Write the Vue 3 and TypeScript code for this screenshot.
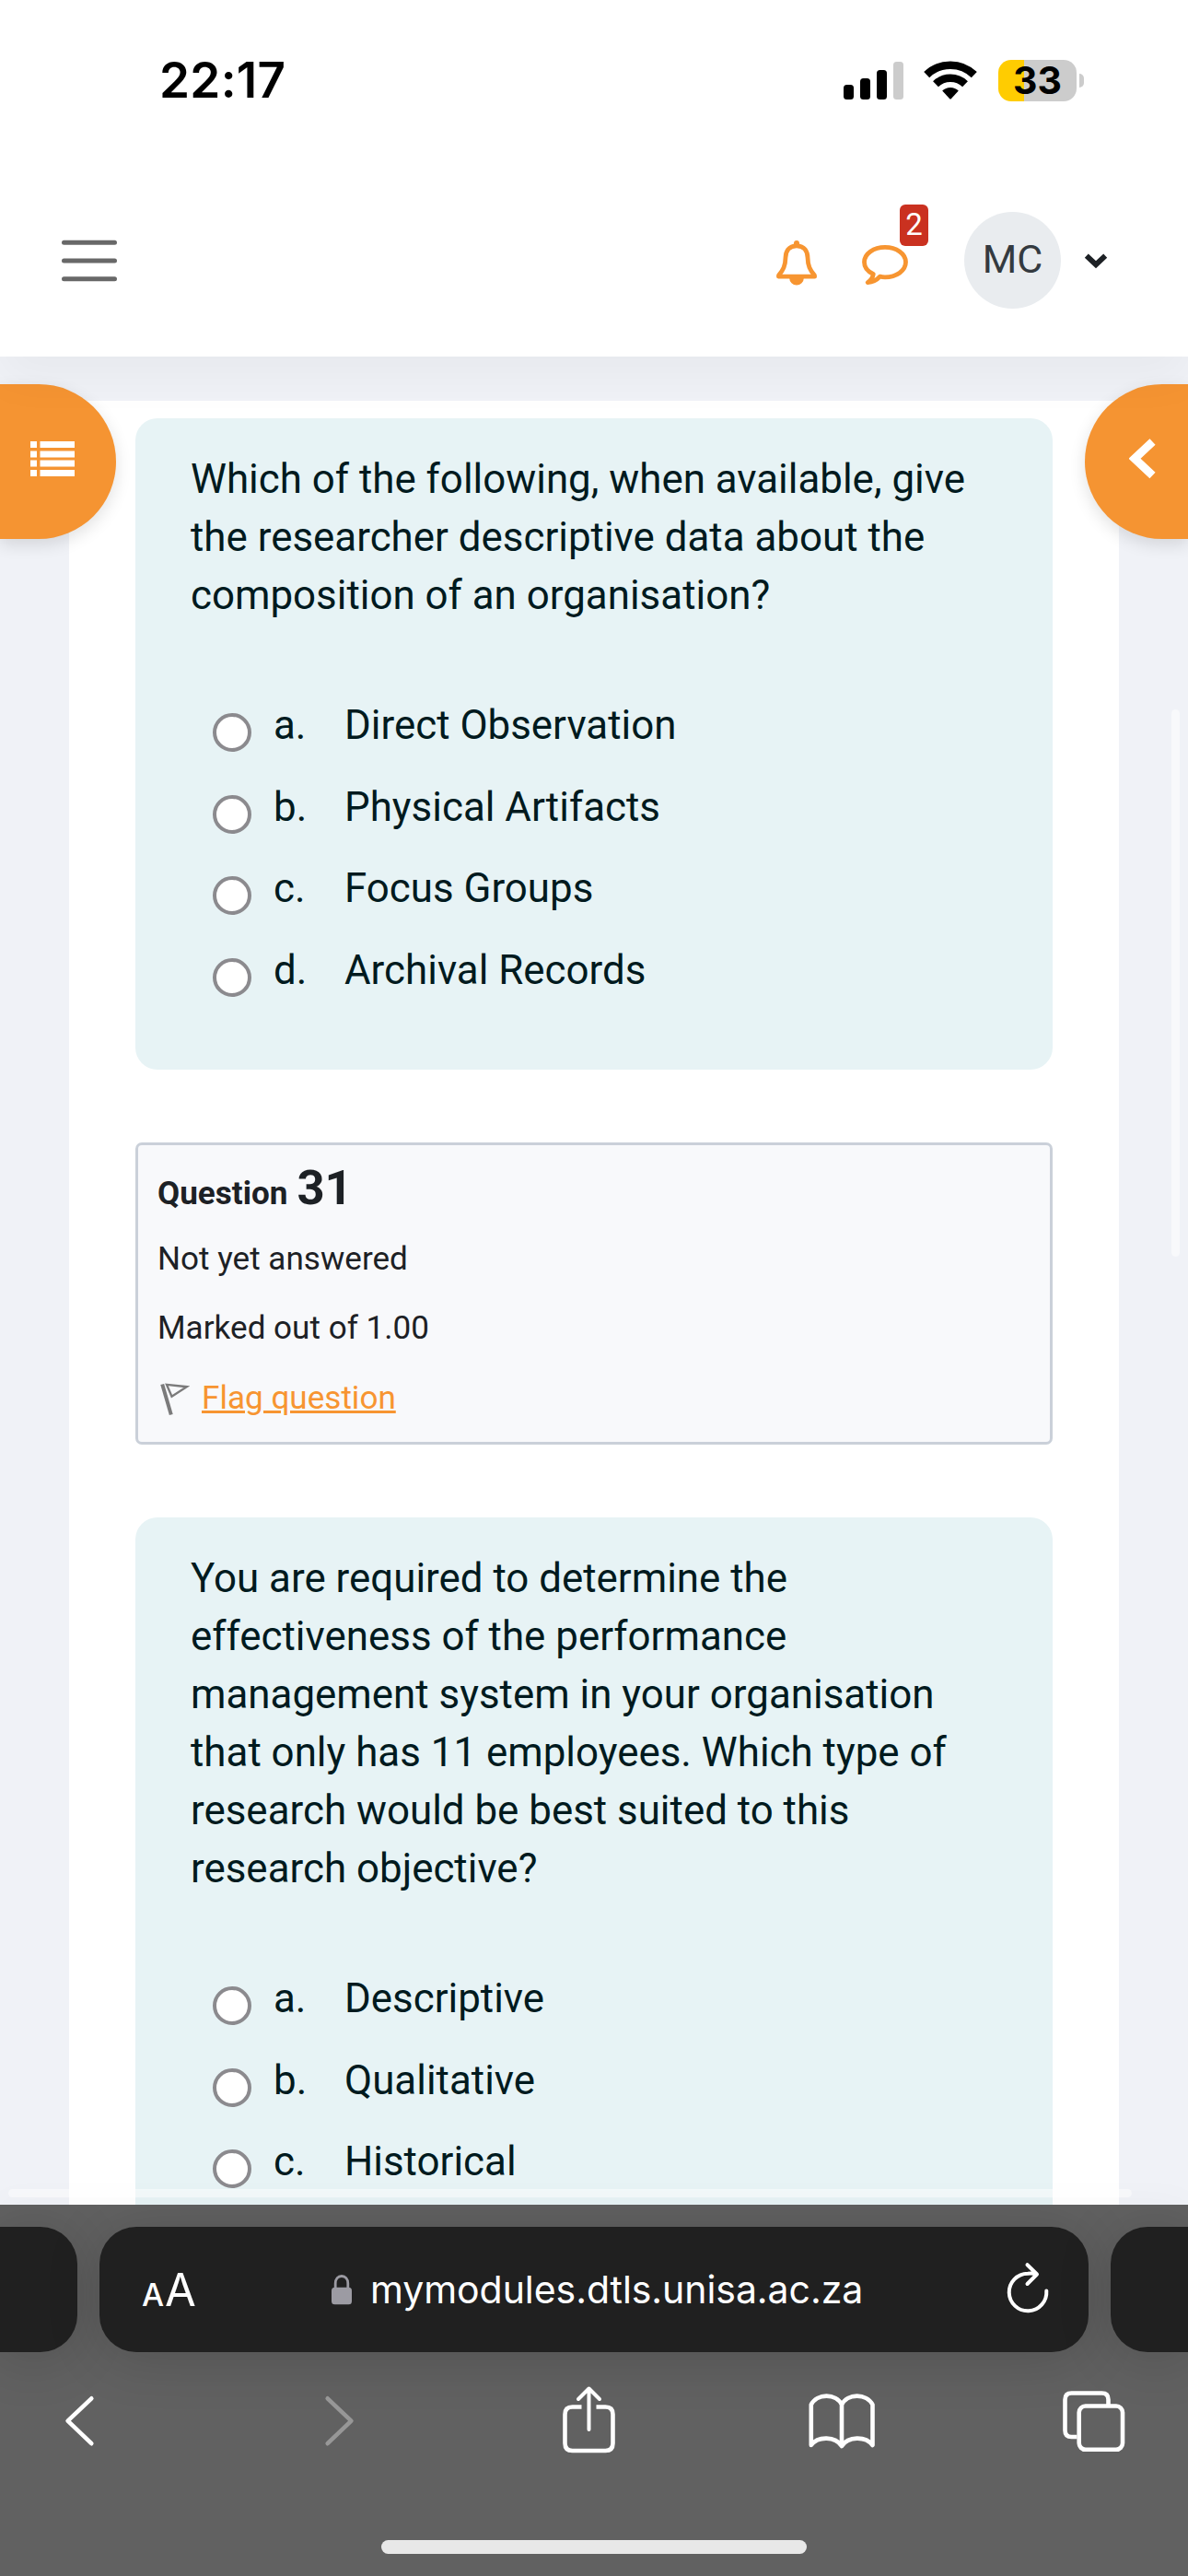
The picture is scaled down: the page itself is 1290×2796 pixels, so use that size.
<script setup lang="ts">
interface Option {
  letter: string
  text: string
}

interface Question {
  lines: string[]
  options: Option[]
}

const current: Question = {
  lines: [
    'Which of the following, when available, give',
    'the researcher descriptive data about the',
    'composition of an organisation?',
  ],
  options: [
    { letter: 'a.', text: 'Direct Observation' },
    { letter: 'b.', text: 'Physical Artifacts' },
    { letter: 'c.', text: 'Focus Groups' },
    { letter: 'd.', text: 'Archival Records' },
  ],
}

const next: Question = {
  lines: [
    'You are required to determine the',
    'effectiveness of the performance',
    'management system in your organisation',
    'that only has 11 employees. Which type of',
    'research would be best suited to this',
    'research objective?',
  ],
  options: [
    { letter: 'a.', text: 'Descriptive' },
    { letter: 'b.', text: 'Qualitative' },
    { letter: 'c.', text: 'Historical' },
  ],
}
</script>

<template>
  <div class="screen">
    <header class="top">
      <div class="status">
        <span class="time">22:17</span>
        <div class="indicators">
          <svg class="signal" width="65" height="41" viewBox="0 0 65 41">
            <rect x="0" y="25" width="11" height="16" rx="3.5" />
            <rect x="18" y="18" width="11" height="23" rx="3.5" />
            <rect x="36" y="9" width="11" height="32" rx="3.5" />
            <rect x="54" y="0" width="11" height="41" rx="3.5" fill="#ccc" />
          </svg>
          <svg class="wifi" width="58" height="42" viewBox="0 0 58 42">
            <path d="M3.2 15.2a37 37 0 0 1 51.600 0" fill="none" stroke="#000" stroke-width="8.600" />
            <path d="M13 25.200a23 23 0 0 1 32 0" fill="none" stroke="#000" stroke-width="8.400" />
            <path d="M20.200 32.600a12.500 12.500 0 0 1 17.600 0L30 41q-1 1-2 0z" />
          </svg>
          <div class="battery"><span>33</span></div>
          <i class="nub"></i>
        </div>
      </div>

      <nav class="navbar">
        <svg class="menu" width="60" height="46" viewBox="0 0 60 46">
          <path d="M2.500 3.300h55M2.500 23h55M2.500 42.800h55" stroke="#686868" stroke-width="5" stroke-linecap="round" />
        </svg>
        <div class="tools">
          <svg class="bell" width="48" height="50" viewBox="0 0 48 50" fill="none" stroke="#f79531" stroke-width="4.800" stroke-linejoin="round" stroke-linecap="round">
            <path d="M24 6.800C15.200 6.800 12.200 12.800 12 19.500C11.800 28.500 9.500 33 4.600 38.800L4.400 40.200H43.600L43.400 38.800C38.500 33 36.200 28.500 36 19.500C35.800 12.800 32.800 6.800 24 6.800Z" />
            <path d="M21 5.500V4a3 3 0 0 1 6 0v1.500zM16.200 42h15.600a7.800 7.500 0 0 1-15.600 0z" fill="#f79531" stroke="none" />
          </svg>
          <div class="messages">
            <svg width="52" height="46" viewBox="0 0 52 46" fill="none" stroke="#f79531" stroke-width="4.800" stroke-linejoin="round">
              <path d="M26 3.400C13.800 3.400 3.500 10.200 3.500 19.600C3.500 25.300 7.200 29.800 13.300 32.500C12.800 36.400 10.500 39.200 7.200 41.600C12.600 41.200 17.200 38.900 20.500 35.200C22.200 35.600 24 35.800 26 35.800C38.200 35.800 48.500 28.900 48.500 19.600C48.500 10.200 38.200 3.400 26 3.400Z" />
            </svg>
            <b class="count">2</b>
          </div>
          <div class="avatar">MC</div>
          <svg class="caret" width="26" height="18" viewBox="0 0 26 18">
            <path d="M2.800 3.600L13 13.200L23.200 3.600" fill="none" stroke="#1d2125" stroke-width="5.800" stroke-linejoin="miter" />
          </svg>
        </div>
      </nav>
    </header>

    <main class="page">
      <div class="sheet">
        <section class="card">
          <p class="prompt">
            <span v-for="line in current.lines" :key="line">{{ line }}</span>
          </p>
          <ul class="answers">
            <li v-for="o in current.options" :key="o.letter">
              <i class="radio"></i><span class="letter">{{ o.letter }}</span><span>{{ o.text }}</span>
            </li>
          </ul>
        </section>

        <section class="info">
          <h3><span>Question</span><span class="number">31</span></h3>
          <p class="state">Not yet answered</p>
          <p class="grade">Marked out of 1.00</p>
          <p class="flag">
            <svg width="32" height="36" viewBox="0 0 32 36">
              <path d="M2.200 1.500L11.800 34.500" stroke="#7b7b7b" stroke-width="4" />
              <path d="M7 1.900L28.800 4.200L12.500 14.800Z" fill="none" stroke="#7b7b7b" stroke-width="2.400" />
            </svg>
            <a>Flag question</a>
          </p>
        </section>

        <section class="card">
          <p class="prompt">
            <span v-for="line in next.lines" :key="line">{{ line }}</span>
          </p>
          <ul class="answers">
            <li v-for="o in next.options" :key="o.letter">
              <i class="radio"></i><span class="letter">{{ o.letter }}</span><span>{{ o.text }}</span>
            </li>
          </ul>
        </section>
      </div>
    </main>

    <button class="drawer left" aria-label="Open course index">
      <svg width="48" height="38" viewBox="0 0 48 38" fill="#fff">
        <path d="M0 0h7v7H0zM10.500 0H48v7H10.500zM0 10.400h7v7H0zM10.500 10.400H48v7H10.500zM0 20.600h7v7H0zM10.500 20.600H48v7H10.500zM0 31h7v7H0zM10.500 31H48v7H10.500z" />
      </svg>
    </button>
    <button class="drawer right" aria-label="Open block drawer">
      <svg width="30" height="44" viewBox="0 0 30 44">
        <path d="M25.500 3.500L6 21.700L25.500 40" fill="none" stroke="#fff" stroke-width="9" />
      </svg>
    </button>
    <i class="scroll-y"></i>
    <i class="scroll-x"></i>

    <footer class="browser">
      <div class="tabs">
        <div class="tab edge first"></div>
        <div class="tab address">
          <span class="aa"><small>A</small>A</span>
          <svg class="lock" width="22" height="33" viewBox="0 0 22 33">
            <path d="M4.200 16V9.500C4.200 4.500 7 1.500 11 1.500S17.800 4.500 17.800 9.500V16" fill="none" stroke="#9c9ba3" stroke-width="2.800" />
            <rect y="13.700" width="22" height="18.500" rx="3.500" fill="#9c9ba3" />
          </svg>
          <span class="url">mymodules.dtls.unisa.ac.za</span>
          <svg class="reload" width="46" height="56" viewBox="0 0 46 56" fill="none" stroke="#fff" stroke-width="4" stroke-linecap="round" stroke-linejoin="round">
            <path d="M43.300 31.500A20.300 20.300 0 1 1 23 12.700Q28 12.300 32.500 13.200M22.500 3.200L33 13.500L22.500 24" />
          </svg>
        </div>
        <div class="tab edge last"></div>
      </div>

      <div class="toolbar">
        <svg width="80" height="80" viewBox="0 0 80 80"><path d="M53.300 17.300L27.600 41.700L53.300 66.200" /></svg>
        <svg class="dim" width="80" height="80" viewBox="0 0 80 80"><path d="M33.700 17.300L59.400 41.700L33.700 66.200" /></svg>
        <svg width="80" height="80" viewBox="0 0 80 80">
          <path stroke-linecap="butt" d="M34.500 26.500H24.500Q16.500 26.500 16.500 34.500V66Q16.500 74 24.500 74H60.500Q68.500 74 68.500 66V34.500Q68.500 26.500 60.500 26.500H50.500" />
          <path d="M42.500 51V6.500M31 18L42.500 6.500L54 18" stroke-width="4" />
        </svg>
        <svg width="80" height="80" viewBox="0 0 80 80" stroke-width="4.200">
          <path d="M41 24C35 11.500 14 11.500 7.800 24V68C15 58 34 58 41 69C48 58 67 58 74.500 68V24C68 11.500 47 11.500 41 24ZM41 24V69" />
        </svg>
        <svg width="80" height="80" viewBox="0 0 80 80">
          <path stroke-linecap="butt" d="M21.500 59H15.500Q8.500 59 8.500 52V18.500Q8.500 11.500 15.500 11.500H48.500Q55.500 11.500 55.500 18.500V24" />
          <rect x="23.700" y="25.500" width="47.300" height="47.300" rx="7" />
        </svg>
      </div>
      <i class="home"></i>
    </footer>
  </div>
</template>

<style>
body {
  margin: 0;
}
</style>

<style scoped>
.screen {
  position: relative;
  display: flex;
  flex-direction: column;
  width: 1290px;
  height: 2796px;
  overflow: hidden;
  background: #f0f2f7;
  color: #1d2125;
  font-family: Roboto, 'Liberation Sans', sans-serif;
  font-size: 43.880px;
}

p,
h3,
ul {
  margin: 0;
  padding: 0;
}

svg {
  display: block;
  flex: none;
}

/* ---- header ---- */
.top {
  position: relative;
  z-index: 3;
  flex: none;
  height: 387px;
  background: #fff;
  box-shadow: 0 24px 48px rgba(0, 0, 0, 0.04);
}

.status {
  display: flex;
  justify-content: space-between;
  align-items: center;
  box-sizing: border-box;
  height: 174px;
  padding: 0 113px 0 173px;
  color: #000;
  font-family: Inter, 'Liberation Sans', sans-serif;
}

.time {
  font-size: 53px;
  font-weight: 600;
  letter-spacing: 0.300px;
}

.indicators {
  display: flex;
  align-items: center;
}

.wifi {
  margin: 0 23px 0 22px;
}

.battery {
  width: 85px;
  height: 45px;
  border-radius: 14px;
  background: linear-gradient(90deg, #ffcc01 28px, #ccc 28px);
  font-size: 41px;
  font-weight: 700;
  line-height: 45px;
  text-align: center;
}

.nub {
  width: 5px;
  height: 15px;
  margin-left: 3px;
  border-radius: 0 5px 5px 0;
  background: #ccc;
}

.navbar {
  display: flex;
  justify-content: space-between;
  align-items: flex-start;
  height: 213px;
  padding: 0 87px 0 67px;
}

.menu {
  margin-top: 86px;
}

.tools {
  display: flex;
}

.bell {
  margin: 86px 46px 0 0;
}

.messages {
  position: relative;
  margin: 91px 60px 0 0;
}

.count {
  position: absolute;
  left: 42px;
  top: -43px;
  width: 31px;
  height: 45px;
  border-radius: 6px;
  background: #ca3120;
  color: #fff;
  font-size: 33px;
  font-weight: 400;
  line-height: 44px;
  text-align: center;
}

.avatar {
  width: 105px;
  height: 105px;
  margin: 56px 25px 0 0;
  border-radius: 50%;
  background: #e9ecef;
  color: #343a40;
  font-size: 43px;
  line-height: 103px;
  text-align: center;
}

.caret {
  margin-top: 100px;
}

/* ---- page ---- */
.page {
  flex: none;
  box-sizing: border-box;
  height: 2006px;
  padding: 48px 75px 0;
  overflow: hidden;
}

.sheet {
  padding: 19px 72px 0;
  background: #fff;
}

.card {
  box-sizing: border-box;
  padding: 35px 60px 76px;
  border-radius: 24px;
  background: #e7f3f5;
  color: #001a1e;
  line-height: 63px;
}

.prompt span {
  display: block;
  white-space: nowrap;
}

.answers {
  margin-top: 78px;
  list-style: none;
}

.answers li {
  display: flex;
  height: 63px;
  padding-left: 24px;
  white-space: nowrap;
}

.answers li + li {
  margin-top: 25.700px;
}

.radio {
  box-sizing: border-box;
  width: 42px;
  height: 42px;
  margin: 18px 24px 0 0;
  border: 4px solid #8b8a8e;
  border-radius: 50%;
  background: #fff;
}

.letter {
  width: 77px;
}

.info {
  box-sizing: border-box;
  height: 328px;
  margin: 79px 0;
  padding: 16px 21px;
  border: 3px solid #cad0d9;
  border-radius: 7px;
  background: #f8f9fb;
  font-size: 35.100px;
  line-height: 50px;
}

.info h3 {
  display: flex;
  align-items: baseline;
  gap: 10px;
  height: 60px;
  font-size: 35.100px;
  font-weight: 700;
  line-height: 60px;
}

.number {
  font-size: 52.600px;
}

.state {
  margin-top: 22px;
}

.grade {
  margin-top: 25px;
}

.flag {
  display: flex;
  margin-top: 26px;
}

.flag svg {
  margin: 9px 13px 0 3px;
}

.flag a {
  color: #f79531;
  text-decoration: underline;
  text-decoration-thickness: 3px;
}

/* ---- floating drawer buttons and scroll indicators ---- */
.drawer {
  position: absolute;
  z-index: 2;
  top: 417px;
  display: flex;
  align-items: center;
  height: 168px;
  border: 0;
  padding: 0 0 6px;
  background: #f59432;
  box-shadow: 0 6px 18px rgba(0, 0, 0, 0.12);
}

.left {
  left: 0;
  width: 126px;
  padding-left: 33px;
  border-radius: 0 84px 84px 0;
}

.right {
  right: 0;
  width: 112px;
  padding-left: 48px;
  border-radius: 84px 0 0 84px;
}

.scroll-y {
  position: absolute;
  top: 770px;
  right: 9px;
  width: 9px;
  height: 594px;
  border-radius: 5px;
  background: rgba(255, 255, 255, 0.5);
}

.scroll-x {
  position: absolute;
  top: 2376px;
  left: 9px;
  width: 1220px;
  height: 9px;
  border-radius: 5px;
  background: rgba(255, 255, 255, 0.45);
}

/* ---- browser chrome ---- */
.browser {
  display: flex;
  flex-direction: column;
  flex: none;
  box-sizing: border-box;
  height: 403px;
  padding-top: 24px;
  background: #616161;
  box-shadow: 0 0 40px rgba(0, 0, 0, 0.03);
  overflow: hidden;
}

.tabs {
  display: flex;
  justify-content: space-between;
  height: 136px;
}

.tab {
  box-sizing: border-box;
  height: 136px;
  background: #202020;
  box-shadow: 0 6px 60px rgba(0, 0, 0, 0.16);
}

.edge {
  width: 84px;
}

.first {
  border-radius: 0 40px 40px 0;
}

.last {
  border-radius: 40px 0 0 40px;
}

.address {
  display: flex;
  width: 1074px;
  padding-left: 46px;
  border-radius: 40px;
  color: #fff;
  font-family: Inter, 'Liberation Sans', sans-serif;
}

.aa {
  width: 206px;
  padding-top: 41px;
  font-size: 49px;
  line-height: 56px;
}

.aa small {
  margin-right: 1px;
  font-size: 34px;
  font-weight: 500;
}

.lock {
  margin: 52px 20px 0 0;
}

.url {
  width: 691px;
  padding-top: 38px;
  font-size: 41px;
  letter-spacing: -0.060px;
  line-height: 60px;
  white-space: nowrap;
}

.reload {
  margin-top: 38px;
}

.toolbar {
  display: flex;
  justify-content: space-between;
  margin-top: 33px;
  padding: 0 62px 0 46px;
}

.toolbar svg {
  fill: none;
  stroke: #fff;
  stroke-width: 4.600;
  stroke-linecap: round;
  stroke-linejoin: round;
}

.toolbar .dim {
  stroke: #979797;
}

.home {
  width: 462px;
  height: 15px;
  margin: 91px auto 0;
  border-radius: 8px;
  background: #e8e8e8;
}
</style>
